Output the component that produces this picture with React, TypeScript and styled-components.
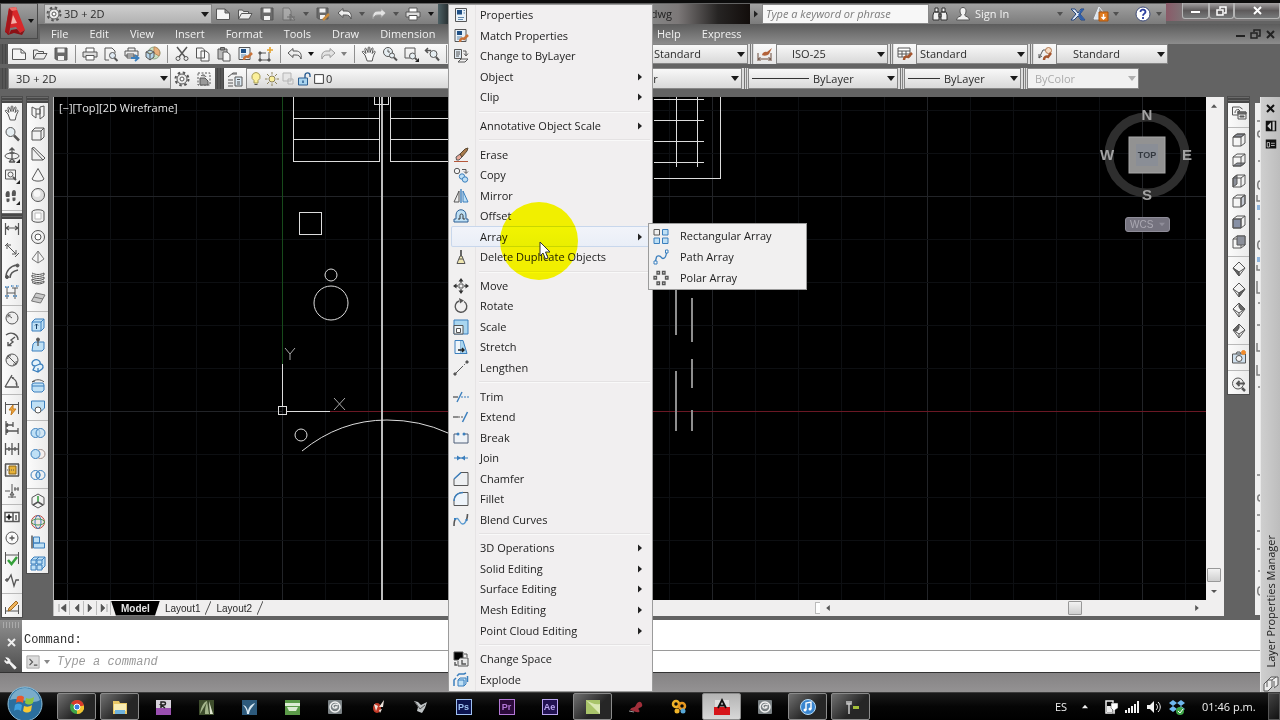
import React from "react";
import styled, { createGlobalStyle, css } from "styled-components";

const GlobalStyle = createGlobalStyle`
  *, *::before, *::after { box-sizing: border-box; }
  body { margin: 0; background: #636363; }
  button, input, select { font: inherit; color: inherit; margin: 0; padding: 0; border: 0; background: none; border-radius: 0; }
  ul { list-style: none; margin: 0; padding: 0; }
  svg { display: block; flex: none; }
`;

const INK = "#565656";
const BLUE = "#3b7fbd";
const SKY = "#bfe0f5";

/* ---------- icons, all on a 16 x 16 grid ---------- */

const cubeEdges = <path d="M2 5l4-3h8v9l-4 3H2zM2 5h8v9M10 5l4-3" />;
const diamond = <path d="M8 1l6 6-6 8-6-8zM2 7l6 4 6-4M8 11v4" />;

const icons: Record<string, React.ReactNode> = {
  new: <path d="M1.500 3h8.500l4.500 4v6.500h-13zM10 3v4h4.500" fill="#f4f4f4" />,
  open: <path d="M1.500 13V4h4l1 1.500h5v2M1.500 13l3-5.500H15L12 13z" fill="#ececec" />,
  save: (
    <>
      <path d="M2 2h12v12H3.500L2 12.500z" fill="#6a6a6a" />
      <path d="M4.500 2.500h7v4h-7zM5 10h6v4H5z" fill="#f2f2f2" stroke="none" />
    </>
  ),
  saveAs: (
    <>
      <path d="M2 2h11v11H3.500L2 11.500z" fill="#6a6a6a" />
      <path d="M4.500 2.500h6v4h-6zM5 9h5v4H5z" fill="#f2f2f2" stroke="none" />
      <path d="M8 14l6-6" stroke="#c98a3c" strokeWidth="2.500" />
    </>
  ),
  export: <path d="M2 2h6l2 3v9H2zM6 11h8M9 8l5 6H9z" opacity="0.55" fill="#bbb" />,
  print: (
    <>
      <path d="M4 6V2h8v4" fill="#fff" />
      <path d="M1 6h14v5H1z" fill="#ddd" />
      <path d="M4 9.500h8V14H4z" fill="#fff" />
    </>
  ),
  preview: (
    <>
      <path d="M2 2h7l3 3v2M2 2v12h4" fill="#f4f4f4" />
      <circle cx="9.500" cy="9.500" r="3" fill="#dfe9f2" />
      <path d="M11.500 12l3 3" strokeWidth="2" />
    </>
  ),
  publish: (
    <>
      <path d="M4 5V2h7v3M1 5h13v5H1zM3 8h7v4H3z" fill="#eee" />
      <path d="M7 12h7M11 9l3.500 3-3.500 3" stroke={BLUE} strokeWidth="1.800" />
    </>
  ),
  dwf: (
    <>
      <circle cx="9" cy="7" r="6" fill="#c9dfc0" stroke="#8fa88a" />
      <path d="M9 1v6l5 3a6 6 0 0 0-5-9" fill="#e8b07c" stroke="#b98a5c" />
      <path d="M1 6l4-2 4 2v5l-4 3-4-3zM1 6l4 2 4-2M5 8v6" fill="#b5d5ea" />
    </>
  ),
  cut: (
    <>
      <path d="M3 1l8 10M13 1L5 11" strokeWidth="1.500" />
      <circle cx="4" cy="12.500" r="2" />
      <circle cx="12" cy="12.500" r="2" />
    </>
  ),
  copyClip: <path d="M1.500 2h6l2 2v8h-8zM6 5h5l3 2.500V15H6z" fill="#f6f6f6" />,
  paste: (
    <>
      <path d="M2 3h9v10H2zM4.500 1.500h4V4h-4z" fill="#b9b9b9" />
      <path d="M7 6h4l3 2.500V15H7z" fill="#f6f6f6" />
    </>
  ),
  match: (
    <>
      <path d="M2 1.500h11v12H2z" fill="#e8f1f8" />
      <path d="M4 3h5v4H4z" fill="#1d4f86" stroke="none" />
      <path d="M4 9h5M4 11h4" stroke="#5f87ab" />
      <path d="M7 14c0-3 2-4 4-3l4-4" stroke="#c9733a" strokeWidth="2.500" />
    </>
  ),
  block: (
    <>
      <path d="M2 14h9V6M2 14V7h6" />
      <path d="M1 13h2v2H1zM10 13h2v2h-2zM1 6h2v2H1z" fill={INK} />
      <path d="M12 1v6M9 4h6" stroke="#e3a32e" strokeWidth="1.600" />
    </>
  ),
  undo: <path d="M1 7l5-4.500V5h3c4 0 6 3 5 8-1-3-2.500-4-5-4H6v2.500z" fill="#eee" />,
  redo: <path d="M15 7l-5-4.500V5H7c-4 0-6 3-5 8 1-3 2.500-4 5-4h3v2.500z" fill="#e2e2e2" stroke="#9a9a9a" />,
  pan: (
    <path
      d="M4 9L1.500 6.500c-.8-1 .5-1.800 1.300-1L5 7.500 3.800 3.200c-.2-1 1.200-1.300 1.600-.3L7 6.500l.2-4.800c.1-1 1.500-1 1.600 0l.3 4.800 1.500-4c.4-.9 1.700-.6 1.500.4L11.200 7.500l1.700-2c.7-.7 1.700 0 1.200.9-1.100 2-1.700 3.600-2.100 5L11.200 15h-5z"
      fill="#f7f7f7"
    />
  ),
  zoom: (
    <>
      <circle cx="6.500" cy="6" r="4.500" fill="#e6eef2" />
      <path d="M10 9.500l5 5" strokeWidth="2.500" />
    </>
  ),
  zoomRt: (
    <>
      <circle cx="6" cy="6" r="4.500" fill="#e6eef2" />
      <path d="M6 3.500V6h2" />
      <circle cx="10" cy="9.500" r="2.500" fill="#e6eef2" />
      <path d="M12 11.500l3 3" strokeWidth="2" />
    </>
  ),
  zoomWin: (
    <>
      <path d="M2 2h10v6M2 2v10h5" />
      <circle cx="9.500" cy="10" r="3" fill="#e6eef2" />
      <path d="M12 12l2 2" strokeWidth="1.800" />
      <path d="M16 12v4h-4z" fill="#222" stroke="none" />
    </>
  ),
  zoomPrev: (
    <>
      <path d="M7 4.500H1.500M4 2L1.500 4.500 4 7" strokeWidth="1.500" />
      <circle cx="9.500" cy="8" r="3.500" fill="#e6eef2" />
      <path d="M12 11l3 3.500" strokeWidth="2" />
    </>
  ),
  gear: (
    <>
      <circle cx="8" cy="8" r="6.500" strokeDasharray="2.500 2.600" strokeWidth="2" />
      <circle cx="8" cy="8" r="5" fill="#ececec" />
      <circle cx="8" cy="8" r="2" fill="#fff" />
    </>
  ),
  wsSettings: (
    <>
      <path d="M2 2h12v12H2z" strokeDasharray="2 1.500" />
      <path d="M4 7h5l3 3v4H4zM5 5c2-2 4-1 5 1" fill="#999" />
    </>
  ),
  layers: (
    <>
      <path d="M1 6l5-4h4M1 9h5M1 12h5M1 15h5M5 3h5" />
      <path d="M8 6h7v9H8zM10 8.500h3M10 11h3M10 13h3" fill="#dceaf4" />
    </>
  ),
  bulb: (
    <>
      <path d="M8 1.500a4.300 4.300 0 0 1 2 8V12H6V9.500a4.300 4.300 0 0 1 2-8z" fill="#fbf09a" stroke="#a59a55" />
      <path d="M6.500 13.500h3" />
    </>
  ),
  sun: (
    <>
      <circle cx="8" cy="8" r="3" fill="#fbf09a" stroke="#8d835a" />
      <path d="M8 1v2.500M8 12.500V15M1 8h2.500M12.500 8H15M3 3l2 2M11 11l2 2M13 3l-2 2M3 13l2-2" stroke="#8d835a" />
    </>
  ),
  vpFreeze: <path d="M3 2h8v8H3zM8 8h5v5H8z" stroke="#b5b5b5" fill="#e6e6e6" />,
  lock: (
    <>
      <path d="M9 7V4.500c0-3.500 5-3.500 5 0V6" stroke="#2c5f93" strokeWidth="1.400" />
      <path d="M2.500 7h9v7h-9z" fill="#a9d4ee" stroke="#2c5f93" />
      <path d="M7 9.500v2.500" stroke="#2c5f93" strokeWidth="1.500" />
    </>
  ),
  swatch: <path d="M3 3h10v10H3z" fill="#fff" stroke="#222" />,
  dimBrush: (
    <>
      <path d="M1 7v8M14 7v8M1 13h13M3.500 11L1.500 13l2 2M11.500 11l2 2-2 2" stroke="#6b4a3a" />
      <path d="M5 9c1-3 3-4 5-3l5-4-3 6c-2 2-5 2-7 1z" fill="#b4633a" stroke="none" />
    </>
  ),
  tableBrush: (
    <>
      <path d="M1 2h12v9H1zM1 5h12M5 5v6M9 5v6M1 8h12" fill="#fff" />
      <path d="M7 14c0-3 2-4 4-3l4-4" stroke="#a5562f" strokeWidth="2.500" />
    </>
  ),
  leaderBrush: (
    <>
      <path d="M2 12L6 4h3M2 12l0-4M2 12l3-2" />
      <circle cx="11.500" cy="4.500" r="3" fill="#f7dcc4" stroke="#b07850" />
      <path d="M7 14c0-3 2-4 4-3l3-4" stroke="#a5562f" strokeWidth="2.500" />
    </>
  ),
  orbit: (
    <>
      <ellipse cx="8" cy="9" rx="7" ry="3" />
      <path d="M8 1v12M5.500 3.500L8 1l2.500 2.500M5.500 6h5M5 15h6M8 12l-3 3M8 12l3 3" strokeWidth="1.300" />
      <path d="M16 12v4h-4z" fill="#222" stroke="none" />
    </>
  ),
  showMotion: (
    <>
      <path d="M1.500 2h10v9h-10z" fill="#f4f4f4" />
      <circle cx="6.500" cy="6.500" r="2.500" />
      <path d="M9 9l3 3" strokeWidth="2" />
      <path d="M16 12v4h-4z" fill="#222" stroke="none" />
    </>
  ),
  walk: (
    <>
      <path
        d="M4 2c2 0 2 3 1.500 6H2C1 5 2 2 4 2zM2.500 9.500h3V12c-.5 1.500-3 1.500-3 0zM10 1c2 0 2.500 3 1.500 6H8C7.500 4 8 1 10 1zM8.500 8.500h3V11c-.5 1.500-3 1.500-3 0z"
        fill={INK}
        stroke="none"
      />
      <path d="M16 12v4h-4z" fill="#222" stroke="none" />
    </>
  ),
  dimLinear: <path d="M1.500 2v12M14.500 2v12M2 7h12M5 5L2 7l3 2M11 5l3 2-3 2" strokeWidth="1.200" />,
  dimAligned: (
    <>
      <path d="M3 3l9 9M3 7V3h4M8 12h4V8" />
      <path d="M1 4l3-3M11 15l4-4" />
    </>
  ),
  dimArc: (
    <>
      <path d="M2 14C2 8 6 3 13 2M6 15c0-4 3-7 8-8" strokeWidth="1.500" />
      <circle cx="13.500" cy="2.500" r="1.500" fill={INK} />
      <circle cx="3" cy="14" r="1.500" fill={INK} />
    </>
  ),
  dimOrd: (
    <>
      <path d="M3 15V3M3 9h8v6M8 4h6M11 9V4" />
      <path d="M1 3h4M7 2h3M12 2h3M1 12h4M9 12h4" stroke={BLUE} strokeWidth="1.600" strokeDasharray="1.500 1" />
    </>
  ),
  dimRadius: (
    <>
      <circle cx="8" cy="8" r="6" fill="#eee" />
      <path d="M8 8L4 5M4 7.500V5h2.500" />
    </>
  ),
  dimJog: <path d="M2 4c5-4 12-1 12 5M5 14l4-3-2-2 4-3M4 11v3.500h3.500" strokeWidth="1.400" />,
  dimDiam: (
    <>
      <circle cx="8" cy="8" r="6" fill="#eee" />
      <path d="M3.800 3.800l8.400 8.400M3.800 7V3.800H7M9 12.200h3.200V9" />
    </>
  ),
  dimAngle: <path d="M1 14h14M1 14L8 2M8 5c3 1 5 4 5 8M7 4l3 1M12 10l1 3" strokeWidth="1.300" />,
  dimQuick: (
    <>
      <path d="M1.500 2v12M14.500 2v12M2 4.500h12" />
      <path d="M9 5l-4 5h3l-1 5 5-6H9z" fill="#f2a73b" stroke="#c47a1c" />
    </>
  ),
  dimBase: <path d="M2 1v14M2 5h7M9 2v5M2 11h12M14 8v6M4 3.500L2 5l2 1.500M4 9.500L2 11l2 1.500" strokeWidth="1.300" />,
  dimCont: <path d="M1.500 2v12M8 2v12M14.500 2v12M2 8h12M5 6v4M11 6v4" strokeWidth="1.300" />,
  dimSpace: (
    <>
      <path d="M1 2h14M1 14h14M1.500 2v12M14.500 2v12" strokeWidth="1.600" />
      <path d="M5 4h7v8H5z" fill="#e7b23a" stroke="#8b6413" />
      <path d="M3 8h7" strokeDasharray="1 1" />
    </>
  ),
  dimBreak: <path d="M8 1v14M1 8h5M10 6h5M4 14h8M11 4v4M14 4v4M8 9l-2 3h4z" />,
  tolerance: (
    <>
      <path d="M1 3.500h14v9H1zM9 3.500v9" fill="#fff" strokeWidth="1.500" />
      <circle cx="5" cy="8" r="1.500" fill="#111" />
      <path d="M5 5v6M2 8h6M12 6v5" stroke="#111" />
    </>
  ),
  centerMark: (
    <>
      <circle cx="8" cy="8" r="6" fill="#fafafa" />
      <path d="M8 5.500v5M5.500 8h5" strokeWidth="1.300" />
    </>
  ),
  inspect: (
    <>
      <path d="M1.500 1v12M14.500 1v12M2 4h12" />
      <path d="M4 9l3.500 4L13 6" stroke="#35a03a" strokeWidth="2.500" />
    </>
  ),
  jogLine: <path d="M1 8h3l3-5 3 11 2-6h3M3 6v4" strokeWidth="1.300" />,
  dimEdit: (
    <>
      <path d="M1.500 8v7M14.500 6v9M2 12h12" />
      <path d="M5 9l7-7 2 2-7 7-3 1z" fill="#efb45c" stroke="#a06a22" />
    </>
  ),
  polysolid: <path d="M2 2l4 2v9l-4-3zM6 4h4v5H6M10 2l4-1v10l-4 3z" fill="#f4f4f4" />,
  box: <path d="M2 5l3-3h9v9l-3 3H2zM2 5h9v9M11 5l3-3" fill="#f2f2f2" />,
  wedge: <path d="M2 2l2-.5L15 12l-2 2H2zM2 2l11 12" fill="#f2f2f2" />,
  cone: <path d="M8 1.500L14 12c-1.500 2.800-10.500 2.800-12 0z" fill="#f4f4f4" />,
  sphere: (
    <>
      <circle cx="8" cy="8" r="6.500" fill="#dedede" />
      <circle cx="7" cy="6.500" r="3.500" fill="#f6f6f6" stroke="none" />
    </>
  ),
  cylinder: (
    <>
      <path d="M2 4c0-3 12-3 12 0v8c0 3-12 3-12 0z" fill="#efefef" />
      <path d="M5 5h6v6H5z" fill="#fff" stroke="#bbb" />
    </>
  ),
  torus: (
    <>
      <circle cx="8" cy="8" r="6.500" fill="#f2f2f2" />
      <circle cx="8" cy="8" r="3" fill="#fff" />
    </>
  ),
  pyramid: <path d="M8 2l6 8-6 4-6-4zM8 2v12" fill="#f4f4f4" stroke="#777" />,
  helix: (
    <path d="M2 3c4 2 8 2 12 0v2c-4 2-8 2-12 0v2c4 2 8 2 12 0v2c-4 2-8 2-12 0v2c4 2 8 2 12 0v1.500c-4 2-8 2-12 0" />
  ),
  planar: <path d="M1.500 11L6 3l9 2-4.500 8zM4 7l9 2" fill="#c9c9c9" stroke="#777" />,
  extrude: (
    <>
      <path d="M2 5l3-3h9v9l-3 3H2zM2 5h9v9M11 5l3-3" fill={SKY} stroke={BLUE} />
      <path d="M6.500 12V7M5 8.500L6.500 7 8 8.500" stroke="#173f66" />
    </>
  ),
  presspull: (
    <>
      <path d="M2 14l1-7 2-2h9v7l-2 2z" fill={SKY} stroke={BLUE} />
      <path d="M8 9V2" strokeWidth="1.300" />
      <circle cx="8" cy="2.500" r="1.500" fill={INK} />
    </>
  ),
  sweep: <path d="M3 3c4-3 8 0 7 3 3 0 4 3 2 5l-4 3-5-2 2-4C2 8 1 5 3 3zM5 8l5-2M8 14v-4" fill="#e4f2fa" stroke={BLUE} strokeWidth="1.300" />,
  revolve: (
    <>
      <path d="M2 6l2-1h9l1 2v5l-2 2H4l-2-2zM2 8h12" fill={SKY} stroke={BLUE} />
      <path d="M2 4c3-3 9-3 12 0M2 4l3-1" />
    </>
  ),
  loft: (
    <>
      <path d="M1.500 2h13v7l-3 3h-7l-3-3z" fill={SKY} stroke={BLUE} />
      <circle cx="8" cy="11" r="3" fill="#fff" />
    </>
  ),
  union: (
    <>
      <circle cx="5.500" cy="8" r="4.500" fill={SKY} stroke={BLUE} />
      <circle cx="10.500" cy="8" r="4.500" fill={SKY} fillOpacity="0.6" stroke={BLUE} />
    </>
  ),
  subtract: (
    <>
      <circle cx="10.500" cy="8" r="4.500" stroke="#a0908c" fill="#f4efee" />
      <circle cx="5.500" cy="8" r="4.500" fill={SKY} stroke={BLUE} />
    </>
  ),
  intersect: (
    <>
      <circle cx="5.500" cy="8" r="4.500" fill="#f4f4f4" stroke={BLUE} />
      <circle cx="10.500" cy="8" r="4.500" stroke={BLUE} />
      <path d="M8 4.500c2.500 2 2.500 5 0 7-2.500-2-2.500-5 0-7z" fill={SKY} stroke={BLUE} />
    </>
  ),
  move3d: (
    <>
      <path d="M8 1l6 3.500v7L8 15l-6-3.500v-7z" />
      <path d="M8 3v6" stroke="#2f9d3a" strokeWidth="1.500" />
      <path d="M8 9l-5 3M8 9l5 3" strokeWidth="1.500" />
    </>
  ),
  rotate3d: (
    <>
      <circle cx="8" cy="8" r="6.500" stroke="#b5433a" fill="#f2e4e2" />
      <ellipse cx="8" cy="8" rx="3" ry="6.500" stroke={BLUE} />
      <ellipse cx="8" cy="8" rx="6.500" ry="3" stroke="#4a9a55" />
    </>
  ),
  align3d: (
    <>
      <path d="M2 1.500v13" strokeWidth="1.500" />
      <path d="M3.500 3h6v6h-6zM3.500 9h11v5h-11z" fill={SKY} stroke={BLUE} />
    </>
  ),
  array3d: <path d="M1 5h5v4H1zM7 5h5v4H7zM1 10h5v5H1zM7 10h5v5H7zM1 5l3-3h11v9l-3 3M12 5l3-3M6 5l3-3" fill={SKY} stroke={BLUE} />,
  namedViews: (
    <>
      <path d="M1.500 2v8h6M1.500 2h7l3 2M4 8c0-3 2-4 4-3M7 4l2 2-3 1" />
      <path d="M7 7h8v7H7z" fill="#e6e6e6" />
      <path d="M7 7h8v2H7zM9 11h4v1H9z" fill="#777" />
    </>
  ),
  viewTop: (
    <>
      <path d="M2 5l4-3h8l-4 3z" fill="#8b8f99" />
      {cubeEdges}
    </>
  ),
  viewBottom: (
    <>
      <path d="M2 14l4-3h8l-4 3z" fill="#8b8f99" />
      {cubeEdges}
    </>
  ),
  viewLeft: (
    <>
      <path d="M2 5l4-3v9l-4 3z" fill="#8b8f99" />
      {cubeEdges}
    </>
  ),
  viewRight: (
    <>
      <path d="M10 5l4-3v9l-4 3z" fill="#c5c9d2" />
      {cubeEdges}
    </>
  ),
  viewFront: (
    <>
      <path d="M2 5h8v9H2z" fill="#8790a5" />
      {cubeEdges}
    </>
  ),
  viewBack: (
    <>
      {cubeEdges}
      <path d="M6 2h8v9H6z" fill="#8b8f99" />
    </>
  ),
  isoSW: (
    <>
      <path d="M2 7l6 4v4z" fill="#666" />
      {diamond}
    </>
  ),
  isoSE: (
    <>
      <path d="M14 7l-6 4v4z" fill="#666" />
      {diamond}
    </>
  ),
  isoNE: (
    <>
      <path d="M8 1l6 6-4 1-2-3z" fill="#666" />
      {diamond}
    </>
  ),
  isoNW: (
    <>
      <path d="M8 1L2 7l4 1 2-3z" fill="#666" />
      {diamond}
    </>
  ),
  camera: (
    <>
      <path d="M1.500 5h13v9h-13zM5 5l1-2h3l1 2" fill="#cfe0ee" />
      <circle cx="8" cy="9.500" r="3" fill="#f5f5f5" />
      <circle cx="12.500" cy="3.500" r="2" fill="#f08b2c" stroke="#f08b2c" />
    </>
  ),
  viewPrev: (
    <>
      <circle cx="7" cy="7.500" r="5.500" fill="#eee" />
      <path d="M14 7.500H6M8.500 5L6 7.500 8.500 10" strokeWidth="1.800" />
      <path d="M11 12l3 3" strokeWidth="2.500" />
    </>
  ),
  properties: (
    <>
      <path d="M2.500 1.500h11v13h-11z" fill="#e8f1f8" />
      <path d="M4 3h5v4.500H4z" fill="#1d4f86" stroke="none" />
      <path d="M10.500 3.500h1.500M10.500 6h1.500M5 10.500h6M5 12.500h5" stroke="#5f87ab" />
    </>
  ),
  byLayer: (
    <>
      <path d="M1.500 1.500h7v9h-7zM3 4h4M3 6h4M3 8h3" fill="#dfe9f2" />
      <path d="M10 3h3v4M11 5.500L13 8l2-2.500M5 14l3-3h7l-3 3z" />
    </>
  ),
  erase: (
    <>
      <path d="M1 14.500h14" stroke="#b5573a" />
      <path d="M3 10l4-3 2 3-3 3H3.500z" fill="#e8a898" />
      <path d="M7 7l5-5 3-1-1 3-5 6z" fill="#a87b4c" stroke="#5e4a33" />
    </>
  ),
  copyObj: (
    <>
      <circle cx="4" cy="4" r="2.700" fill="#f4f4f4" />
      <path d="M9 2.500h4V6M11 4.500l2 2 2-2" />
      <circle cx="9" cy="9.500" r="2.700" fill={SKY} stroke={BLUE} />
      <circle cx="12" cy="12.500" r="2.700" fill={SKY} stroke={BLUE} />
    </>
  ),
  mirror: (
    <>
      <path d="M6 3v11H1z" fill="#eee" />
      <path d="M10 3v11h5z" fill={SKY} stroke={BLUE} />
      <path d="M8 1v14" stroke={BLUE} strokeWidth="1.400" />
    </>
  ),
  offset: (
    <>
      <path d="M1 14h14v-3h-2V7c0-7-10-7-10 0v4H1z" fill={SKY} stroke="#2c5f93" />
      <path d="M5 11h2V7.500c0-2 3-2 3 0V11h2" stroke="#333" />
    </>
  ),
  overkill: (
    <>
      <path d="M8 1v6" strokeWidth="1.800" />
      <path d="M7 7h2l3 7.500H4zM6 10h4" fill="#efe6b0" />
    </>
  ),
  move: (
    <>
      <path d="M6 6h4v4H6z" />
      <path d="M8 5V1.500M8 11v3.500M5 8H1.500M11 8h3.500" strokeWidth="1.400" />
      <path d="M5.500 3.500L8 0l2.500 3.500zM5.500 12.500L8 16l2.500-3.500zM3.500 5.500L0 8l3.500 2.500zM12.500 5.500L16 8l-3.500 2.500z" fill="#333" stroke="none" />
    </>
  ),
  rotate: (
    <>
      <path d="M6 3a5.800 5.800 0 1 0 5 0.500" strokeWidth="1.400" />
      <path d="M6 0l5 2.500-4 3z" fill={INK} stroke="none" />
    </>
  ),
  scale: (
    <>
      <path d="M1 1h14v14H1z" fill="#a9d6f0" stroke={BLUE} />
      <path d="M1 6.500h9V15H1z" fill="#e9f3f9" />
      <path d="M3.500 9.500h4v4h-4z" fill="#fff" />
    </>
  ),
  stretch: (
    <>
      <path d="M2 1.500h6v13H2z" fill="#eef5fa" stroke={BLUE} />
      <path d="M8 1.500h2l4 13H8" fill="#a9d6f0" stroke={BLUE} />
      <path d="M5 11h6M9 9l2 2-2 2" stroke="#222" strokeWidth="1.400" />
    </>
  ),
  lengthen: (
    <>
      <path d="M2 14L9 7" />
      <path d="M9 7l5-5" strokeDasharray="1.500 1.500" />
      <path d="M1 13h2v2H1zM13 1h2v2h-2z" fill={INK} />
    </>
  ),
  trim: (
    <>
      <path d="M0 8h5" strokeWidth="1.300" />
      <path d="M8 8h8" strokeDasharray="2 1" stroke={BLUE} />
      <path d="M9 3L4 13" stroke={BLUE} strokeWidth="1.400" />
    </>
  ),
  extend: (
    <>
      <path d="M0 8h5" strokeWidth="1.300" />
      <path d="M5 8h6" strokeDasharray="2 1" />
      <path d="M14.500 3l-5 10" stroke={BLUE} strokeWidth="1.500" />
    </>
  ),
  break: (
    <>
      <path d="M4 4H1v9h14V4h-3" fill="#eef2f6" stroke="#4e5f78" />
      <circle cx="5" cy="4" r="1.500" fill={BLUE} stroke="none" />
      <circle cx="11" cy="4" r="1.500" fill={BLUE} stroke="none" />
    </>
  ),
  join: (
    <>
      <path d="M1 8h14" stroke={BLUE} />
      <path d="M4 5.500L8 8l-4 2.500zM12 5.500L8 8l4 2.500z" fill={BLUE} stroke="none" />
    </>
  ),
  chamfer: (
    <>
      <path d="M1 14.500V8l7-6.500h7v13z" fill="#eef0f2" />
      <path d="M1 8l7-6.500" stroke={BLUE} strokeWidth="1.400" />
    </>
  ),
  fillet: (
    <>
      <path d="M1 14.500V10c0-5 3.500-8.500 9-8.500h5v13z" fill="#eef4fa" />
      <path d="M1 10c0-5 3.500-8.500 9-8.500" stroke={BLUE} strokeWidth="1.400" />
    </>
  ),
  blend: (
    <>
      <path d="M2.500 7.500c3-4 4 4.500 7 4.500 2.500 0 3-2 4-4" stroke="#5b9bd0" strokeWidth="1.300" />
      <path d="M1 14c0-3 .5-6 1.500-7M13.500 8c.5-2 1-3 1-6" strokeWidth="1.600" />
      <path d="M1 6h2v2H1zM12.500 7h2v2h-2z" fill={BLUE} stroke="none" />
    </>
  ),
  changeSpace: (
    <>
      <path d="M1 1h9v8H1z" fill="#000" />
      <path d="M7 7h8v8H5v-5M11 3h3v3" fill="#e9e9e9" />
      <path d="M9 9v4h4M2 11v3h2" strokeWidth="1.400" />
    </>
  ),
  explode: (
    <>
      <path d="M5 8h6v6H5zM5 8l2-2h6v6l-2 2" fill={SKY} stroke={BLUE} />
      <path d="M1 14V8l2-2M4 4l2-2h5l2-1M14.500 4v6" stroke={BLUE} strokeWidth="1.500" />
    </>
  ),
  rectArray: (
    <>
      <path d="M1 1.500h5.500V7H1z" />
      <path d="M9.500 1.500H15V7H9.500zM1 10h5.500v5.500H1zM9.500 10H15v5.500H9.500z" fill={SKY} stroke={BLUE} />
    </>
  ),
  pathArray: (
    <>
      <path d="M2.500 12l1-4c.5-1.500 3-1.500 4-.5 1 1 1 2 2.500 2s3-1.500 3.500-6" stroke={BLUE} strokeWidth="1.300" />
      <path d="M1 12h3v3H1zM12.500 1h2.500v3h-2.500z" fill="#fff" stroke={BLUE} />
    </>
  ),
  polarArray: (
    <path d="M4 1.500h2.500V4H4zM9.500 1.500H12V4H9.500zM1 6.500h2.500V9H1zM12.500 6.500H15V9h-2.500zM4 12h2.500v2.500H4zM9.500 12H12v2.500H9.500z" strokeWidth="1.300" />
  ),
  binoculars: (
    <path d="M3 2h3v4H3zM10 2h3v4h-3zM2 6h5v8H1V9zM9 6h5l1 3v5H9zM7 8h2v3H7z" fill="#f0f0f0" stroke="#333" />
  ),
  user: (
    <path d="M8 1.500c4 0 3.500 6 1.500 7.500 1 2 5 1.500 5 5h-13c0-3.500 4-3 5-5C4.500 7.500 4 1.500 8 1.500z" fill="#f2f2f2" stroke="#555" />
  ),
  exchange: (
    <>
      <path d="M1 3h4l3 4 3-4h3l-4 5 5 6h-4l-3-4-4 4H1l5-6z" fill="#dfe8f5" stroke="#24457c" />
      <path d="M11 3h3l-4 5 5 6h-4L8 9z" fill="#2f5ea8" stroke="none" />
    </>
  ),
  apps: (
    <>
      <path d="M6 1L1 13h6M6 1l4 5" fill="#d8e4f0" stroke="#e9eef5" />
      <path d="M6 6h9v9H6z" fill="#e07b20" stroke="#a8540f" />
      <path d="M10.500 8v5M8.500 11l2 2 2-2" stroke="#fff" strokeWidth="1.400" />
    </>
  ),
  prompt: (
    <>
      <path d="M1 1h14v14H1z" fill="#dcdcdc" stroke="#a2a2a2" />
      <path d="M4 4.500L7.500 8 4 11.500M9 11.500h4" stroke="#555" strokeWidth="1.300" />
    </>
  ),
  wrench: (
    <path
      d="M2 2l3 .5L6.500 4l.5 2.500 6.500 6c1 1-.8 3-2 2L6 8l-3 .5L1 6.500 1 5l2 1.500L5 5z"
      fill="#f5f5f5"
      stroke="#f5f5f5"
    />
  ),
  stack: <path d="M1 8l4-4h4v7l-4 4H1zM4 5v6M5 4l3-3h7v8l-4 3M9 4l4-3M11 5v6" fill="#eee" />,
  paneLeft: (
    <>
      <path d="M1 1h14v14H1z" fill="#111" stroke="none" />
      <path d="M8 3v10L3 8zM10 2h3v12h-3z" fill="#ccc" stroke="none" />
    </>
  ),
  paneMenu: (
    <>
      <path d="M1 2h14v12H1z" fill="#111" stroke="none" />
      <path d="M3 6h3v6H3zM8 7h5M8 10h5" stroke="#ddd" />
    </>
  ),
};

const Icon = ({ name, size = 16 }: { name: string; size?: number }) => (
  <svg width={size} height={size} viewBox="0 0 16 16" fill="none" stroke={INK} strokeWidth="1" aria-hidden="true">
    {icons[name]}
  </svg>
);

/* ---------- shell ---------- */

const Shell = styled.div`
  position: relative;
  display: flex;
  flex-direction: column;
  min-height: 100vh;
  overflow: hidden;
  background: #636363;
  color: #2b2b2b;
  font: 11px/16px "Open Sans", "Noto Sans", sans-serif;
`;

const Header = styled.header`
  display: flex;
  height: 44px;
  border-top: 3px solid #0c0c0c;
  background: #636363;
`;

const AppButton = styled.button`
  display: grid;
  grid-template-columns: 26px 10px;
  align-items: center;
  width: 38px;
  height: 36px;
  border: 1px solid #4a4a4a;
  background: linear-gradient(#a0a0a0, #6a6a6a);
`;

const HeaderRows = styled.div`
  display: flex;
  flex: 1;
  min-width: 0;
  flex-direction: column;
`;

const TitleBar = styled.div`
  display: flex;
  align-items: center;
  height: 21px;
`;

const QuickAccess = styled.div`
  display: flex;
  align-items: center;
  height: 20px;
  padding-left: 6px;
  background: linear-gradient(#a2a2a2, #7e7e7e);
`;

const IconButton = styled.button<{ $w?: number }>`
  display: flex;
  flex: none;
  align-items: center;
  justify-content: center;
  width: ${(p) => p.$w ?? 21}px;
  height: 20px;
`;

const caretMark = css`
  content: "";
  border: 4px solid transparent;
  border-top: 5px solid #1a1a1a;
  border-bottom: 0;
`;

const CaretButton = styled.button<{ $w?: number; $dim?: boolean }>`
  display: flex;
  flex: none;
  align-items: center;
  justify-content: center;
  width: ${(p) => p.$w ?? 12}px;
  height: 20px;
  opacity: ${(p) => (p.$dim ? 0.5 : 1)};
  &::after {
    content: "";
    border: 3px solid transparent;
    border-top: 4px solid #111;
    border-bottom: 0;
  }
`;

const Glass = styled.div`
  flex: 1;
  height: 20px;
  padding-right: 78px;
  text-align: right;
  line-height: 20px;
  color: #222;
  background: linear-gradient(90deg, #4d6064, #2a3234 10px, #555 180px, #858585 215px, #7c7878 240px, #262423 280px, #120d0b);
`;

const InfoCenter = styled.div`
  display: flex;
  align-items: center;
  height: 20px;
  padding-right: 2px;
  background: linear-gradient(#a0a0a0, #7c7c7c);
  color: #f2f2f2;
`;

const SearchBox = styled.input`
  width: 167px;
  height: 20px;
  padding: 0 3px;
  background: #f7f7f7;
  border: 1px solid #888;
  color: #333;
  &::placeholder { color: #7b7b7b; font-style: italic; opacity: 1; }
`;

const SignIn = styled.button`
  display: flex;
  align-items: center;
  gap: 4px;
  width: 103px;
  padding-left: 4px;
`;

const WindowButtons = styled.div`
  display: flex;
  height: 18px;
  align-self: flex-start;
  padding-left: 16px;
  background: linear-gradient(90deg, #8a5a68, #7d7577 18px, #777);
`;

const WindowButton = styled.button<{ $w: number }>`
  display: grid;
  place-items: center;
  width: ${(p) => p.$w}px;
  height: 16px;
  border: 1px solid #b5b5b5;
  border-top: 0;
  border-radius: 0 0 3px 3px;
  background: linear-gradient(#a5a2a3, #5e5a5b 50%, #77797a);
`;

const MenuBar = styled.nav`
  display: flex;
  align-items: center;
  height: 20px;
  margin-left: 2px;
  background: linear-gradient(#5c5c5c, #8c8c8c);
  color: #f0f0f0;
`;

const MenuGroup = styled.div<{ $grow?: boolean }>`
  display: flex;
  flex: ${(p) => (p.$grow ? "1" : "0 0 606px")};
`;

const MenuLabel = styled.button`
  padding: 0 10px 0 11px;
  line-height: 18px;
`;

const DocButton = styled.button`
  display: grid;
  place-items: center;
  width: 15px;
  height: 16px;
`;

const Toolbars = styled.div`
  display: flex;
  flex-direction: column;
  gap: 4px;
  padding: 0 0 8px;
`;

const ToolRow = styled.div<{ $h: number }>`
  display: flex;
  align-items: stretch;
  height: ${(p) => p.$h}px;
`;

const DarkGrip = styled.div<{ $w: number }>`
  flex: none;
  width: ${(p) => p.$w}px;
  background: repeating-linear-gradient(90deg, #555 0 2px, #474747 2px 3px);
`;

const LightGrip = styled.div`
  flex: none;
  width: 6px;
  background: linear-gradient(90deg, #ddd 2px, #777 2px 3px, #ddd 3px 4px, #888 4px 5px, #ddd 5px);
`;

const Strip = styled.div<{ $w?: number }>`
  display: flex;
  flex: none;
  align-items: center;
  width: ${(p) => (p.$w ? `${p.$w}px` : "auto")};
  background: linear-gradient(#fafafa, #e6e6e6);
`;

const Rule = styled.span`
  width: 8px;
  height: 18px;
  background: linear-gradient(90deg, transparent 4px, #8f8f8f 4px 5px, transparent 5px);
`;

const Combo = styled.label<{ $w: number; $pale?: boolean; $dark?: boolean }>`
  position: relative;
  display: flex;
  flex: none;
  align-items: center;
  width: ${(p) => p.$w}px;
  border: 1px solid #868686;
  background: ${(p) => (p.$pale ? "#f1f1f1" : p.$dark ? "linear-gradient(#cfcfcf, #b2b2b2)" : "linear-gradient(#f8f8f8, #d9d9d9)")};
  color: ${(p) => (p.$pale ? "#8c8c8c" : "#2b2b2b")};
  select {
    flex: 1;
    min-width: 0;
    height: 18px;
    appearance: none;
    outline: none;
  }
  &::after {
    ${caretMark}
    position: absolute;
    right: 2px;
    top: 7px;
    pointer-events: none;
    opacity: ${(p) => (p.$pale ? 0.3 : 1)};
  }
`;

const Indent = styled.span<{ $w: number }>`
  flex: none;
  width: ${(p) => p.$w}px;
`;

const LineSample = styled.span<{ $w: number }>`
  flex: none;
  width: ${(p) => p.$w}px;
  height: 1px;
  margin: 0 4px 0 3px;
  background: #333;
`;

/* ---------- workspace ---------- */

const Workspace = styled.div`
  display: flex;
  flex: 1;
`;

const MainColumn = styled.div`
  display: flex;
  flex: 1;
  min-width: 0;
  flex-direction: column;
`;

const Stage = styled.div`
  display: flex;
  flex: 1;
`;

const Rail = styled.div<{ $w: number; $bottom: number; $left: number }>`
  display: flex;
  flex: none;
  flex-direction: column;
  width: ${(p) => p.$w}px;
  margin: 0 0 ${(p) => p.$bottom}px ${(p) => p.$left}px;
  outline: 1px solid #4d4d4d;
  background: linear-gradient(90deg, #fbfbfb, #ebebeb);
`;

const RailGrip = styled.div`
  flex: none;
  height: 6px;
  background: repeating-linear-gradient(#6a6a6a 0 1px, #484848 1px 3px);
`;

const RailRule = styled.div`
  flex: none;
  height: 6px;
  background: linear-gradient(transparent 3px, #b9b9b9 3px 4px, transparent 4px);
`;

const RailButton = styled.button`
  display: grid;
  flex: 1 1 0;
  min-height: 16px;
  place-items: center;
`;

const Viewport = styled.div`
  display: flex;
  flex: 1;
  min-width: 0;
  flex-direction: column;
  margin: 0 4px 1px 5px;
  border-left: 1px solid #bbb;
`;

const ViewRow = styled.div`
  display: flex;
  flex: 1;
`;

const Canvas = styled.div`
  position: relative;
  flex: 1;
  background: #000;
`;

const Drawing = styled.svg`
  position: absolute;
  inset: 0;
  width: 100%;
  height: 100%;
`;

const ViewLabel = styled.button`
  position: absolute;
  left: 5px;
  top: 3px;
  color: #e4e4e4;
`;

const ViewCube = styled.div`
  position: absolute;
  right: 12px;
  top: 8px;
  width: 94px;
`;

const WcsButton = styled.button`
  display: flex;
  width: 45px;
  height: 15px;
  margin: 12px 0 0 25px;
  padding: 0 4px;
  align-items: center;
  justify-content: space-between;
  border: 1px solid #8f8d99;
  border-radius: 3px;
  background: #75737f;
  color: #aaa8b2;
  font: 10px/12px "Liberation Sans", sans-serif;
`;

const VScroll = styled.div`
  display: flex;
  flex: none;
  flex-direction: column;
  align-items: center;
  width: 18px;
  padding: 6px 2px 5px 0;
  background: #f1f0f0;
`;

const Arrow = styled.span<{ $dir: "up" | "down" | "left" | "right"; $tone?: string }>`
  width: 6px;
  height: 6px;
  background: ${(p) => p.$tone ?? "#555"};
  clip-path: ${(p) =>
    ({
      up: "polygon(0 80%, 50% 20%, 100% 80%)",
      down: "polygon(0 20%, 50% 80%, 100% 20%)",
      left: "polygon(80% 0, 20% 50%, 80% 100%)",
      right: "polygon(20% 0, 80% 50%, 20% 100%)",
    })[p.$dir]};
`;

const Thumb = styled.span`
  width: 14px;
  height: 14px;
  border: 1px solid #989898;
  border-radius: 1px;
  background: linear-gradient(#f2f2f2, #cfcfcf);
`;

const Push = styled.span`
  flex: 1;
`;

const TabRow = styled.div`
  display: flex;
  align-items: center;
  height: 16px;
  background: #f0efef;
`;

const TabNav = styled.button<{ $w: number }>`
  display: grid;
  place-items: center;
  width: ${(p) => p.$w}px;
  height: 14px;
  border-right: 1px solid #bdbdbd;
`;

const Tab = styled.button<{ $active?: boolean }>`
  height: 15px;
  padding: 0 ${(p) => (p.$active ? 10 : 5)}px;
  font: ${(p) => (p.$active ? "bold" : "normal")} 10px/15px "Liberation Sans", sans-serif;
  ${(p) =>
    p.$active &&
    css`
      color: #e6e6e6;
      background: #000;
      clip-path: polygon(0 0, 100% 0, 90% 100%, 10% 100%);
    `}
`;

const HScroll = styled.div`
  display: flex;
  align-items: center;
  width: 409px;
  padding: 0 24px 0 0;
`;

const Splitter = styled.span`
  width: 5px;
  height: 12px;
  margin-right: 5px;
  border: 1px solid #bbb;
  border-right: 0;
  background: #fff;
`;

const CommandPanel = styled.section`
  display: flex;
  height: 53px;
  margin-top: 3px;
  border-bottom: 1px solid #333;
  font: 12px/20px "Liberation Mono", monospace;
`;

const CommandSide = styled.div`
  display: flex;
  flex: none;
  flex-direction: column;
  align-items: center;
  justify-content: space-between;
  width: 22px;
  padding: 2px 0;
  background: linear-gradient(#8f8f8f, #4e4e4e);
`;

const CommandGrip = styled.span`
  width: 16px;
  height: 6px;
  background: repeating-linear-gradient(90deg, #aaa 0 1px, transparent 1px 3px);
`;

const CommandBody = styled.div`
  display: flex;
  flex: 1;
  flex-direction: column;
  background: #fff;
`;

const History = styled.div`
  height: 31px;
  padding: 11px 2px 0;
  border-bottom: 1px solid #9a9a9a;
  line-height: 18px;
`;

const CommandLine = styled.label`
  display: flex;
  flex: 1;
  align-items: center;
  padding-left: 4px;
  input { flex: 1; outline: none; }
  input::placeholder { color: #9a9a9a; font-style: italic; opacity: 1; }
`;

const StatusBar = styled.div`
  height: 19px;
  background: linear-gradient(#858384, #949293);
`;

const Sliver = styled.div`
  flex: none;
  width: 5px;
  margin: 6px 0 2px;
  overflow: hidden;
  background: #f0f0f0;
`;

const Palette = styled.aside`
  display: flex;
  flex: none;
  flex-direction: column;
  align-items: center;
  width: 20px;
  padding: 2px 0 0;
  border-left: 1px solid #e8e8e8;
  background: linear-gradient(90deg, #cfcfcf, #bdbdbd);
`;

const PaletteButton = styled.button`
  display: grid;
  place-items: center;
  width: 18px;
  height: 18px;
`;

const PaletteTitle = styled.h2`
  margin: auto 0 8px;
  font: inherit;
  line-height: 18px;
  color: #1d1d1d;
  writing-mode: vertical-rl;
  rotate: 180deg;
`;

/* ---------- context menu ---------- */

const MenuPanel = styled.ul`
  position: absolute;
  left: 448px;
  top: 4px;
  bottom: 28px;
  display: flex;
  flex-direction: column;
  width: 205px;
  padding: 0 2px 1px;
  border: 1px solid #9b9b9b;
  background: linear-gradient(90deg, #f1f0f0 26px, #e6e4e5 26px 27px, #f1eff0 27px);
`;

const MenuItem = styled.li<{ $active?: boolean }>`
  position: relative;
  display: flex;
  flex: 1 1 0;
  min-height: 18px;
  border-radius: 2px;
  ${(p) =>
    p.$active &&
    css`
      background: linear-gradient(#f2f4fa, #e9eef7);
      box-shadow: inset 0 0 0 1px #c8d7ec;
    `}
`;

const MenuButton = styled.button`
  display: grid;
  flex: 1;
  grid-template-columns: 20px 1fr 12px;
  column-gap: 9px;
  align-items: center;
  justify-items: start;
  text-align: left;
  color: #222;
  > svg:first-child { justify-self: center; }
`;

const MenuRule = styled.li`
  flex: none;
  height: 8px;
  margin-left: 28px;
  background: linear-gradient(transparent 3px, #e4e2e3 3px 4px, #f9f9f9 4px 5px, transparent 5px);
`;

const Flyout = styled.ul`
  position: absolute;
  z-index: 3;
  left: 197px;
  top: -3px;
  width: 159px;
  padding: 1px 2px;
  border: 1px solid #9b9b9b;
  background: #f1f0f0;
`;

const FlyoutItem = styled.li`
  display: flex;
  height: 21px;
`;

const ClickHalo = styled.div`
  position: absolute;
  z-index: 2;
  left: 500px;
  top: 202px;
  width: 78px;
  height: 78px;
  border-radius: 50%;
  background: #ff0;
  mix-blend-mode: multiply;
  pointer-events: none;
`;

const Pointer = styled.svg`
  position: absolute;
  z-index: 4;
  left: 539px;
  top: 241px;
  pointer-events: none;
`;

/* ---------- task bar ---------- */

const TaskBar = styled.footer`
  display: flex;
  align-items: center;
  height: 28px;
  border-top: 1px solid #3c3c3c;
  background: linear-gradient(#1a1a1a, #050505 50%, #000);
  color: #f0f0f0;
`;

const StartButton = styled.button`
  display: grid;
  place-items: center;
  width: 50px;
  height: 36px;
  margin-top: -6px;
  z-index: 1;
`;

const TaskList = styled.div`
  display: flex;
  flex: 1;
  gap: 4px;
  padding-left: 7px;
`;

const TaskButton = styled.button<{ $state?: "open" | "active" }>`
  display: grid;
  place-items: center;
  width: 39px;
  height: 27px;
  ${(p) =>
    p.$state &&
    css`
      border: 1px solid #8b8b8b;
      border-radius: 2px;
      background: ${p.$state === "active" ? "linear-gradient(#b4b4b4, #d8d8d8)" : "linear-gradient(135deg, #707070, #262626 60%)"};
    `}
`;

const Badge = styled.span<{ $bg: string; $fg: string }>`
  display: grid;
  place-items: center;
  width: 16px;
  height: 16px;
  border: 1px solid ${(p) => p.$fg};
  background: ${(p) => p.$bg};
  color: ${(p) => p.$fg};
  font: bold 9px/14px "Liberation Sans", sans-serif;
`;

const Tray = styled.div`
  display: flex;
  align-items: center;
`;

const TrayItem = styled.span<{ $w: number }>`
  display: grid;
  place-items: center;
  width: ${(p) => p.$w}px;
`;

const Clock = styled.time`
  width: 66px;
  padding-left: 12px;
  white-space: nowrap;
`;

const ShowDesktop = styled.button`
  width: 12px;
  height: 27px;
  margin-left: 12px;
  border: 1px solid #555;
  background: linear-gradient(135deg, #444, #111);
`;

/* ---------- data ---------- */

type Entry = { label: string; icon?: string; more?: boolean };
const menuSections: Entry[][] = [
  [
    { label: "Properties", icon: "properties" },
    { label: "Match Properties", icon: "match" },
    { label: "Change to ByLayer", icon: "byLayer" },
    { label: "Object", more: true },
    { label: "Clip", more: true },
  ],
  [{ label: "Annotative Object Scale", more: true }],
  [
    { label: "Erase", icon: "erase" },
    { label: "Copy", icon: "copyObj" },
    { label: "Mirror", icon: "mirror" },
    { label: "Offset", icon: "offset" },
    { label: "Array", more: true },
    { label: "Delete Duplicate Objects", icon: "overkill" },
  ],
  [
    { label: "Move", icon: "move" },
    { label: "Rotate", icon: "rotate" },
    { label: "Scale", icon: "scale" },
    { label: "Stretch", icon: "stretch" },
    { label: "Lengthen", icon: "lengthen" },
  ],
  [
    { label: "Trim", icon: "trim" },
    { label: "Extend", icon: "extend" },
    { label: "Break", icon: "break" },
    { label: "Join", icon: "join" },
    { label: "Chamfer", icon: "chamfer" },
    { label: "Fillet", icon: "fillet" },
    { label: "Blend Curves", icon: "blend" },
  ],
  [
    { label: "3D Operations", more: true },
    { label: "Solid Editing", more: true },
    { label: "Surface Editing", more: true },
    { label: "Mesh Editing", more: true },
    { label: "Point Cloud Editing", more: true },
  ],
  [
    { label: "Change Space", icon: "changeSpace" },
    { label: "Explode", icon: "explode" },
  ],
];

const flyoutItems: Entry[] = [
  { label: "Rectangular Array", icon: "rectArray" },
  { label: "Path Array", icon: "pathArray" },
  { label: "Polar Array", icon: "polarArray" },
];

const navRail = ["pan", "zoom", "orbit", "showMotion", "walk"];
const dimRail = [
  ["dimLinear", "dimAligned", "dimArc", "dimOrd"],
  ["dimRadius", "dimJog", "dimDiam", "dimAngle"],
  ["dimQuick", "dimBase", "dimCont", "dimSpace", "dimBreak"],
  ["tolerance", "centerMark", "inspect", "jogLine"],
  ["dimEdit"],
];
const modelRail = [
  ["polysolid", "box", "wedge", "cone", "sphere", "cylinder", "torus", "pyramid", "helix", "planar"],
  ["extrude", "presspull", "sweep", "revolve", "loft"],
  ["union", "subtract", "intersect"],
  ["move3d", "rotate3d", "align3d", "array3d"],
];
const viewRail = [
  ["namedViews"],
  ["viewTop", "viewBottom", "viewLeft", "viewRight", "viewFront", "viewBack"],
  ["isoSW", "isoSE", "isoNE", "isoNW"],
  ["camera"],
  ["viewPrev"],
];
const standardTools = [
  ["new", "open", "save"],
  ["print", "preview", "publish", "dwf"],
  ["cut", "copyClip", "paste", "match", "block"],
];

/* ---------- pieces ---------- */

const Tool = ({ name, w, size }: { name: string; w?: number; size?: number }) => (
  <IconButton $w={w} aria-label={name}>
    <Icon name={name} size={size} />
  </IconButton>
);

const RailGroups = ({ groups }: { groups: string[][] }) => (
  <>
    {groups.map((group, i) => (
      <React.Fragment key={i}>
        {i > 0 && <RailRule />}
        {group.map((name) => (
          <RailButton key={name} aria-label={name}>
            <Icon name={name} />
          </RailButton>
        ))}
      </React.Fragment>
    ))}
  </>
);

const Choice = ({ label, value, disabled }: { label: string; value: string; disabled?: boolean }) => (
  <select aria-label={label} disabled={disabled}>
    <option>{value}</option>
  </select>
);

const MoreMark = () => (
  <svg width="4" height="8" viewBox="0 0 4 8" aria-hidden="true">
    <path d="M0 0.500l4 3.500-4 3.500z" fill="#222" />
  </svg>
);

const ContextMenu = () => (
  <MenuPanel>
    {menuSections.map((section, i) => (
      <React.Fragment key={i}>
        {i > 0 && <MenuRule />}
        {section.map((item) => (
          <MenuItem key={item.label} $active={item.label === "Array"}>
            <MenuButton>
              {item.icon ? <Icon name={item.icon} /> : <span />}
              <span>{item.label}</span>
              {item.more && <MoreMark />}
            </MenuButton>
            {item.label === "Array" && (
              <Flyout>
                {flyoutItems.map((sub) => (
                  <FlyoutItem key={sub.label}>
                    <MenuButton>
                      <Icon name={sub.icon!} />
                      <span>{sub.label}</span>
                    </MenuButton>
                  </FlyoutItem>
                ))}
              </Flyout>
            )}
          </MenuItem>
        ))}
      </React.Fragment>
    ))}
  </MenuPanel>
);

const columns = Array.from({ length: 60 }, (_, i) => 13 + i * 43);
const rows = Array.from({ length: 40 }, (_, i) => 13 + i * 43);

const Model = () => (
  <Drawing fill="none" stroke="#dcdcdc" aria-label="Model space">
    <g shapeRendering="crispEdges">
      {columns.map((x, i) => (
        <path key={x} d={`M${x} 0v3000`} stroke={i % 5 === 0 ? "#222428" : "#0d0f12"} />
      ))}
      {rows
        .filter((y) => y !== 314)
        .map((y) => (
          <path key={y} d={`M0 ${y}h4000`} stroke={(y - 99) % 215 === 0 ? "#222428" : "#0d0f12"} />
        ))}
      <path d="M228 0v267" stroke="#174a1b" />
      <path d="M0 314h228" stroke="#222428" />
      <path d="M276 314h4000" stroke="#6a1824" />
      <path d="M239 0v64h86V0M239 21h86M239 42h86M394 64h-58V0M336 21h58M336 42h58" />
      <path d="M328 0v3000" stroke="#bdbdbd" strokeWidth="2" />
      <path d="M320 0v7h14V0M245 115h22v22h-22zM224 309h8v8h-8zM228 267v42M232 314h44" />
      <path d="M666 0v81h-66M600 2h50M600 23h50M600 44h50M600 65h50M622 0v70M643 0v70" />
      <path d="M622 190v48M622 274v60M638 201v44M638 262v29M638 313v21" stroke="#8e8e8e" strokeWidth="2" />
    </g>
    <circle cx="277" cy="178" r="6" />
    <circle cx="277" cy="206" r="17" />
    <circle cx="247" cy="338" r="6" />
    <path d="M248 354Q286 323 333 323Q366 323 394 336" />
    <path d="M231 251l5 6 5-6M236 257v6M280 301l11 12M291 301l-11 12" stroke="#a8a8a8" />
  </Drawing>
);

const Compass = () => (
  <svg width="94" height="100" viewBox="0 0 94 100" fill="#a3a3a3" fontFamily="Liberation Sans, sans-serif" fontWeight="bold" fontSize="15" textAnchor="middle">
    <circle cx="47" cy="50" r="38" fill="none" stroke="#2e2e2e" strokeWidth="9" />
    <rect x="29" y="32" width="36" height="36" fill="#929292" stroke="#a6a6a6" />
    <rect x="36" y="39" width="22" height="22" fill="#8a8e96" />
    <text x="47" y="53" fontSize="9" fill="#33383f">TOP</text>
    <text x="47" y="15">N</text>
    <text x="47" y="95">S</text>
    <text x="7" y="55">W</text>
    <text x="87" y="55">E</text>
  </svg>
);

const Cross = ({ color }: { color: string }) => (
  <svg width="9" height="9" viewBox="0 0 9 9" aria-hidden="true">
    <path d="M1 1l7 7M8 1L1 8" stroke={color} strokeWidth="2" />
  </svg>
);

const Restore = ({ color }: { color: string }) => (
  <svg width="11" height="10" viewBox="0 0 11 10" fill="none" stroke={color} strokeWidth="1.500" aria-hidden="true">
    <path d="M1 4h6v5H1zM4 3V1h6v6H8" />
  </svg>
);

const Dash = ({ color }: { color: string }) => (
  <svg width="9" height="9" viewBox="0 0 9 9" aria-hidden="true">
    <path d="M0 6h9" stroke={color} strokeWidth="2" />
  </svg>
);

const TabStep = ({ w, d, label }: { w: number; d: string; label: string }) => (
  <TabNav $w={w} aria-label={label}>
    <svg width="10" height="8" viewBox="0 0 10 8" fill="#555" stroke="#555" strokeWidth="0.500" aria-hidden="true">
      <path d={d} />
    </svg>
  </TabNav>
);

const Slash = () => (
  <svg width="6" height="14" viewBox="0 0 6 14" aria-hidden="true">
    <path d="M6 0L0 14" stroke="#555" />
  </svg>
);

/* left edges of the tool icons that show beside the palette */
const CoveredTools = () => (
  <svg width="5" height="508" viewBox="0 0 5 508" fill="none" stroke="#7d7d7d" strokeWidth="1.500" aria-hidden="true">
    <path d="M2 18h3M5 28c-3 0-3 6 0 6M3 58h2M5 78c-3 0-3 8 0 8M2 92v6h3M3 116h2M5 138c-3 0-3 8 0 8M2 162v5h3M2 178v12h3M3 200h2M2 222h3M2 240v8h3M2 262v10h3M3 284h2M2 372h3M5 392c-3 0-3 6 0 6M2 412h3M2 428h3M2 446h3M3 468h2M5 484c-3 0-3 8 0 8" />
    <path d="M2 102h3v5H2zM2 154h3v5H2z" fill="#8db4dd" stroke="none" />
  </svg>
);

const TaskGlyph = ({ children }: { children: React.ReactNode }) => (
  <svg width="18" height="18" viewBox="0 0 18 18" aria-hidden="true">
    {children}
  </svg>
);

const Smax = () => (
  <TaskGlyph>
    <rect x="2" y="2" width="14" height="14" rx="1" fill="#7b8285" />
    <circle cx="9" cy="9" r="5" fill="none" stroke="#f0f0f0" strokeWidth="1.500" />
    <path d="M12 7c-3-2-6 0-5 2s4 1 4 0H9" fill="none" stroke="#f0f0f0" strokeWidth="1.300" />
  </TaskGlyph>
);

const Tasks = () => (
  <TaskList>
    <TaskButton $state="open" aria-label="Browser">
      <TaskGlyph>
        <circle cx="9" cy="9" r="7" fill="#3fa648" />
        <path d="M9 9L3 5.500A7 7 0 0 1 16 8z" fill="#d93a2b" />
        <path d="M9 9l7-1.500A7 7 0 0 1 9 16z" fill="#f4c430" />
        <circle cx="9" cy="9" r="3" fill="#3b7de0" stroke="#fff" />
      </TaskGlyph>
    </TaskButton>
    <TaskButton $state="open" aria-label="Files">
      <TaskGlyph>
        <path d="M2 3h6l1 2h7v11H2z" fill="#e8c766" />
        <path d="M3 6h12v7H3z" fill="#f8ecb4" />
        <path d="M4 12h10v4H4z" fill="#6fb2dc" />
      </TaskGlyph>
    </TaskButton>
    <TaskButton aria-label="Revit">
      <TaskGlyph>
        <path d="M2 2h15v15H2z" fill="#d8d3dc" />
        <path d="M2 10h15v7H2z" fill="#9a4fb0" />
        <path d="M7 10V4h3c2 0 2 3 0 3H7l4 3" fill="none" stroke="#222" strokeWidth="1.500" />
      </TaskGlyph>
    </TaskButton>
    <TaskButton aria-label="Inventor">
      <TaskGlyph>
        <path d="M2 2h15v15H2z" fill="#3e4d2c" />
        <path d="M3 16C4 8 7 4 10 3l2 13H8c0-4 0-7 2-12" fill="#a4b58b" />
        <path d="M12 3l4 13h-3z" fill="#dfe6d0" />
      </TaskGlyph>
    </TaskButton>
    <TaskButton aria-label="Vasari">
      <TaskGlyph>
        <path d="M2 2h15v15H2z" fill="#2d5a7c" />
        <path d="M3 7c2 0 4 2 5 6 1-5 4-7 7-8-2 4-5 5-6 11H7c0-4-2-7-4-9z" fill="#d8e8f2" />
      </TaskGlyph>
    </TaskButton>
    <TaskButton aria-label="Survey">
      <TaskGlyph>
        <path d="M2 2h15v15H2z" fill="#5b9a48" />
        <path d="M2 5h15v3H2zM4 9h11l-2 4H6z" fill="#dcebd2" />
      </TaskGlyph>
    </TaskButton>
    <TaskButton aria-label="Studio">
      <Smax />
    </TaskButton>
    <TaskButton aria-label="Burner">
      <TaskGlyph>
        <ellipse cx="8" cy="10" rx="4" ry="5" fill="#c23a28" />
        <path d="M10 9l5-7-1 7zM5 6l4 2-2 5zM10 12l3-1-2 4z" fill="#efe3dc" />
      </TaskGlyph>
    </TaskButton>
    <TaskButton aria-label="Modeler">
      <TaskGlyph>
        <path d="M2 3l4 1 3 3 6-3-2 6-3 5-5-2 1-4z" fill="#bfc3c5" />
        <path d="M3 4l5 7 5-4" stroke="#555" fill="none" />
      </TaskGlyph>
    </TaskButton>
    <TaskButton>
      <Badge $bg="#0c1450" $fg="#9fc1f2">Ps</Badge>
    </TaskButton>
    <TaskButton>
      <Badge $bg="#2b0a3a" $fg="#b377d6">Pr</Badge>
    </TaskButton>
    <TaskButton>
      <Badge $bg="#221252" $fg="#b9a4ee">Ae</Badge>
    </TaskButton>
    <TaskButton $state="open" aria-label="Recorder">
      <TaskGlyph>
        <path d="M2 2h14v14H2z" fill="#a9c46a" />
        <path d="M2 2l14 14V6C11 7 7 5 2 2z" fill="#dbe8b4" />
      </TaskGlyph>
    </TaskButton>
    <TaskButton aria-label="Lightning">
      <TaskGlyph>
        <path d="M3 12c2-4 4-1 6-5s5-4 6-1-1 3-3 4 2 3 0 4-5-1-9-2z" fill="#a12f3a" />
        <path d="M2 13l5 1" stroke="#999" />
      </TaskGlyph>
    </TaskButton>
    <TaskButton aria-label="Sync">
      <TaskGlyph>
        <circle cx="6" cy="6" r="3" fill="none" stroke="#f0b429" strokeWidth="2.500" />
        <circle cx="12" cy="8" r="3" fill="none" stroke="#e89820" strokeWidth="2.500" />
        <circle cx="7" cy="13" r="2.500" fill="#f0b429" />
        <circle cx="13" cy="13" r="2.500" fill="#58a8d8" />
      </TaskGlyph>
    </TaskButton>
    <TaskButton $state="active" aria-label="Drafting">
      <TaskGlyph>
        <path d="M2 2h14v7H2z" fill="#ddd" />
        <path d="M1 9h16v8H1z" fill="#d6151a" />
        <path d="M5 10l4-8 4 8M6.500 7.500h5" fill="none" stroke="#111" strokeWidth="1.800" />
      </TaskGlyph>
    </TaskButton>
    <TaskButton aria-label="Studio design">
      <Smax />
    </TaskButton>
    <TaskButton $state="open" aria-label="Music">
      <TaskGlyph>
        <circle cx="9" cy="9" r="7.500" fill="#3a86d0" stroke="#b9dcf5" />
        <path d="M7 12V5l5-1v7" fill="none" stroke="#fff" strokeWidth="1.400" />
        <circle cx="6" cy="12" r="1.500" fill="#fff" />
        <circle cx="11" cy="11" r="1.500" fill="#fff" />
      </TaskGlyph>
    </TaskButton>
    <TaskButton $state="open" aria-label="Tuner">
      <TaskGlyph>
        <path d="M7 3v13M5 3v3h4V3" fill="none" stroke="#c8c8c8" strokeWidth="1.500" />
        <path d="M11 8h6v3h-6z" fill="#a5c03a" />
      </TaskGlyph>
    </TaskButton>
  </TaskList>
);

export default function App() {
  return (
    <Shell>
      <GlobalStyle />
      <Header>
        <AppButton aria-label="Application menu">
          <svg width="26" height="32" viewBox="0 0 26 32" aria-hidden="true">
            <path d="M4 27L8 3l7-1 9 23-5 3-4-6-6 1-1 6z" fill="#d8282a" />
            <path d="M4 27L8 3l4 1-4 25z" fill="#a3161b" />
            <path d="M8 3l7-1 1 3-5 1z" fill="#f0706a" />
            <path d="M10 19l2-9 4 8z" fill="#f4b0a8" />
            <path d="M4 26l4 3 2-4 6-1 3 4 5-3-3 5-8-2-6 2z" fill="#8b1015" />
          </svg>
          <CaretButton as="span" $w={8} />
        </AppButton>
        <HeaderRows>
          <TitleBar>
            <QuickAccess>
              <Combo $w={168} $dark>
                <Indent $w={1} />
                <Icon name="gear" size={16} />
                <Indent $w={2} />
                <Choice label="Workspace" value="3D + 2D" />
              </Combo>
              <Tool name="new" w={22} />
              <Tool name="open" w={22} />
              <Tool name="save" w={22} />
              <Tool name="export" w={22} />
              <CaretButton $dim aria-label="Export options" />
              <Tool name="saveAs" w={22} />
              <Tool name="undo" w={22} />
              <CaretButton $dim aria-label="Undo list" />
              <Tool name="redo" w={22} />
              <CaretButton $dim aria-label="Redo list" />
              <Tool name="print" w={22} />
              <CaretButton $w={14} aria-label="Customize" />
            </QuickAccess>
            <Glass>dwg</Glass>
            <InfoCenter>
              <IconButton $w={12} aria-label="Expand search">
                <MoreMark />
              </IconButton>
              <SearchBox placeholder="Type a keyword or phrase" aria-label="Search" />
              <Tool name="binoculars" w={22} />
              <SignIn>
                <Icon name="user" />
                Sign In
              </SignIn>
              <CaretButton $dim aria-label="Account options" />
              <Tool name="exchange" w={24} />
              <Tool name="apps" w={22} />
              <CaretButton $w={8} $dim aria-label="App options" />
              <Indent $w={12} />
              <IconButton $w={22} aria-label="Help">
                <svg width="16" height="16" viewBox="0 0 16 16" aria-hidden="true">
                  <circle cx="8" cy="8" r="7" fill="#fff" stroke="#3d4a78" />
                  <path d="M5.500 6c0-3.500 5-3 5 0 0 1.500-2.500 1.800-2.500 3.700M8 11v2" fill="none" stroke="#2c3fa0" strokeWidth="1.800" />
                </svg>
              </IconButton>
              <CaretButton $w={10} $dim aria-label="Help options" />
            </InfoCenter>
            <WindowButtons>
              <WindowButton $w={27} aria-label="Minimize">
                <Dash color="#fff" />
              </WindowButton>
              <WindowButton $w={25} aria-label="Restore">
                <Restore color="#fff" />
              </WindowButton>
              <WindowButton $w={46} aria-label="Close">
                <Cross color="#fff" />
              </WindowButton>
            </WindowButtons>
          </TitleBar>
          <MenuBar>
            <MenuGroup>
              {["File", "Edit", "View", "Insert", "Format", "Tools", "Draw", "Dimension"].map((m) => (
                <MenuLabel key={m}>{m}</MenuLabel>
              ))}
            </MenuGroup>
            <MenuGroup $grow>
              <MenuLabel>Help</MenuLabel>
              <MenuLabel>Express</MenuLabel>
            </MenuGroup>
            <DocButton aria-label="Minimize drawing">
              <Dash color="#222" />
            </DocButton>
            <DocButton aria-label="Restore drawing">
              <Restore color="#222" />
            </DocButton>
            <DocButton aria-label="Close drawing">
              <Cross color="#222" />
            </DocButton>
            <Indent $w={2} />
          </MenuBar>
        </HeaderRows>
      </Header>

      <Toolbars>
        <ToolRow $h={20}>
          <DarkGrip $w={8} />
          <Strip $w={632}>
            {standardTools.map((group, i) => (
              <React.Fragment key={i}>
                {group.map((n) => (
                  <Tool key={n} name={n} />
                ))}
                <Rule />
              </React.Fragment>
            ))}
            <Tool name="undo" />
            <CaretButton aria-label="Undo list" />
            <Tool name="redo" />
            <CaretButton $dim aria-label="Redo list" />
            <Rule />
            {["pan", "zoomRt", "zoomWin", "zoomPrev"].map((n) => (
              <Tool key={n} name={n} />
            ))}
            <Rule />
          </Strip>
          <Combo $w={108}>
            <Indent $w={13} />
            <Choice label="Text style" value="Standard" />
          </Combo>
          <LightGrip />
          <Strip>
            <Tool name="dimBrush" w={22} />
          </Strip>
          <Combo $w={112}>
            <Indent $w={15} />
            <Choice label="Dimension style" value="ISO-25" />
          </Combo>
          <LightGrip />
          <Strip>
            <Tool name="tableBrush" w={22} />
          </Strip>
          <Combo $w={112}>
            <Indent $w={3} />
            <Choice label="Table style" value="Standard" />
          </Combo>
          <LightGrip />
          <Strip>
            <Tool name="leaderBrush" w={22} />
          </Strip>
          <Combo $w={112}>
            <Indent $w={16} />
            <Choice label="Multileader style" value="Standard" />
          </Combo>
        </ToolRow>
        <ToolRow $h={21}>
          <DarkGrip $w={8} />
          <Combo $w={163}>
            <Indent $w={7} />
            <Choice label="Workspaces" value="3D + 2D" />
          </Combo>
          <Strip>
            <Tool name="gear" w={22} />
            <Tool name="wsSettings" w={22} />
          </Strip>
          <DarkGrip $w={9} />
          <Strip>
            <Tool name="layers" w={22} />
          </Strip>
          <Combo $w={314}>
            <Indent $w={1} />
            {["bulb", "sun", "vpFreeze", "lock"].map((n) => (
              <Icon key={n} name={n} />
            ))}
            <Icon name="swatch" size={14} />
            <Choice label="Layer" value="0" />
          </Combo>
          <Combo $w={182}>
            <Indent $w={56} />
            <Choice label="Color" value="ByLayer" />
          </Combo>
          <LightGrip />
          <Combo $w={150}>
            <LineSample $w={57} />
            <Choice label="Linetype" value="ByLayer" />
          </Combo>
          <LightGrip />
          <Combo $w={117}>
            <LineSample $w={32} />
            <Choice label="Lineweight" value="ByLayer" />
          </Combo>
          <LightGrip />
          <Combo $w={112} $pale>
            <Indent $w={7} />
            <Choice label="Plot style" value="ByColor" disabled />
          </Combo>
        </ToolRow>
      </Toolbars>

      <Workspace>
        <MainColumn>
          <Stage>
            <Rail $w={20} $left={2} $bottom={0}>
              <RailGrip />
              <RailGroups groups={[navRail]} />
              <RailRule />
              <RailGrip />
              <RailGroups groups={dimRail} />
            </Rail>
            <Rail $w={21} $left={5} $bottom={44}>
              <RailGrip />
              <RailGroups groups={modelRail} />
            </Rail>
            <Viewport>
              <ViewRow>
                <Canvas>
                  <Model />
                  <ViewLabel>[−][Top][2D Wireframe]</ViewLabel>
                  <ViewCube>
                    <Compass />
                    <WcsButton>
                      WCS <Arrow $dir="down" $tone="#8f8d99" />
                    </WcsButton>
                  </ViewCube>
                </Canvas>
                <VScroll>
                  <Arrow $dir="up" />
                  <Push />
                  <Thumb />
                  <svg width="6" height="13" viewBox="0 0 6 13" aria-hidden="true">
                    <path d="M0 8h6l-3 3z" fill="#555" />
                  </svg>
                </VScroll>
              </ViewRow>
              <TabRow>
                <TabStep w={16} d="M2 0v8M9 0L4 4l5 4z" label="First layout" />
                <TabStep w={14} d="M7 0L3 4l4 4z" label="Previous layout" />
                <TabStep w={13} d="M3 0l4 4-4 4z" label="Next layout" />
                <TabStep w={14} d="M2 0l4 4-4 4zM8 0v8" label="Last layout" />
                <Tab $active>Model</Tab>
                <Tab>Layout1</Tab>
                <Slash />
                <Tab>Layout2</Tab>
                <Slash />
                <Push />
                <HScroll>
                  <Splitter />
                  <Arrow $dir="left" />
                  <Push />
                  <Thumb />
                  <Indent $w={112} />
                  <Arrow $dir="right" />
                </HScroll>
              </TabRow>
            </Viewport>
            <Rail $w={21} $left={0} $bottom={223}>
              <RailGrip />
              <RailGroups groups={viewRail} />
            </Rail>
            <Indent $w={6} />
            <Sliver>
              <CoveredTools />
            </Sliver>
          </Stage>
          <CommandPanel>
            <CommandSide>
              <CommandGrip />
              <Cross color="#eee" />
              <Icon name="wrench" size={14} />
            </CommandSide>
            <CommandBody>
              <History>Command:</History>
              <CommandLine>
                <Icon name="prompt" size={14} />
                <CaretButton $w={14} $dim aria-label="Recent commands" />
                <Indent $w={3} />
                <input placeholder="Type a command" aria-label="Command line" />
              </CommandLine>
            </CommandBody>
          </CommandPanel>
          <StatusBar />
        </MainColumn>
        <Palette>
          <PaletteButton aria-label="Close palette">
            <Cross color="#111" />
          </PaletteButton>
          <PaletteButton aria-label="Auto-hide">
            <Icon name="paneLeft" size={12} />
          </PaletteButton>
          <PaletteButton aria-label="Palette menu">
            <Icon name="paneMenu" size={12} />
          </PaletteButton>
          <PaletteTitle>Layer Properties Manager</PaletteTitle>
          <Icon name="stack" />
        </Palette>
      </Workspace>

      <TaskBar>
        <StartButton aria-label="Start">
          <svg width="36" height="36" viewBox="0 0 36 36" aria-hidden="true">
            <circle cx="18" cy="18" r="17" fill="#2b6f9e" stroke="#8fc0dc" />
            <path d="M3 14C7-2 29-2 33 14 24 20 12 10 3 14z" fill="#9cc6dd" opacity="0.7" />
            <path d="M10 11c3-2 5-1 7 0l-1 6c-2-1-4-2-7 0z" fill="#e8582c" />
            <path d="M19 12c3 1 5 1 8-1l-1 6c-3 2-5 2-8 0z" fill="#8cc63f" />
            <path d="M8 19c3-2 5-1 7 0l-1 6c-2-1-4-2-7 0z" fill="#3ea0e0" />
            <path d="M17 20c3 1 5 1 8-1l-1 6c-3 2-5 2-8 0z" fill="#f8c832" />
          </svg>
        </StartButton>
        <Tasks />
        <Tray>
          <TrayItem $w={14}>ES</TrayItem>
          <TrayItem $w={34}>
            <Arrow $dir="up" $tone="#f0f0f0" />
          </TrayItem>
          <TrayItem $w={18}>
            <TaskGlyph>
              <path d="M4 3h7v12H4z" fill="none" stroke="#eee" strokeWidth="1.500" />
              <path d="M5 8h5v6H5z" fill="#eee" />
              <path d="M9 5h7v5l-3 2v4h-2v-4l-2-2z" fill="#fff" stroke="#222" strokeWidth="0.500" />
            </TaskGlyph>
          </TrayItem>
          <TrayItem $w={24}>
            <TaskGlyph>
              <path d="M2 12h2v3H2zM5 10h2v5H5zM8 8h2v7H8zM11 6h2v9h-2zM14 3h2v12h-2z" fill="#f2f2f2" />
            </TaskGlyph>
          </TrayItem>
          <TrayItem $w={20}>
            <TaskGlyph>
              <path d="M2 7h3l4-4v12l-4-4H2z" fill="#f2f2f2" />
              <path d="M11 6c2 2 2 4 0 6M13 4c3 3 3 7 0 10" fill="none" stroke="#f2f2f2" />
            </TaskGlyph>
          </TrayItem>
          <TrayItem $w={26}>
            <TaskGlyph>
              <path d="M5 2l4 3-4 3-4-3zM13 2l4 3-4 3-4-3zM5 8l4 3-4 3-4-3zM13 8l4 3-4 3-4-3z" fill="#6fb7ee" />
              <circle cx="12" cy="13" r="4" fill="#3da446" />
              <path d="M10 13l2 2 3-4" fill="none" stroke="#fff" />
            </TaskGlyph>
          </TrayItem>
          <Clock>01:46 p.m.</Clock>
          <ShowDesktop aria-label="Show desktop" />
        </Tray>
      </TaskBar>

      <ContextMenu />
      <ClickHalo />
      <Pointer width="12" height="19" viewBox="0 0 12 19" aria-hidden="true">
        <path d="M1 1v14l3-3 2.500 6 2.500-1-2.500-6H11z" fill="#fff" stroke="#333" />
      </Pointer>
    </Shell>
  );
}
